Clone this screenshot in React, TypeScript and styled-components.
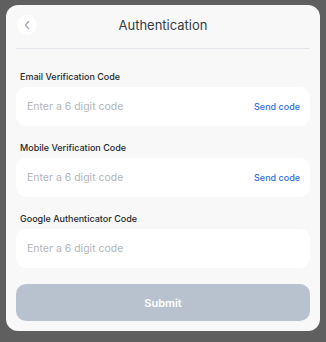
import React from "react";
import styled, { createGlobalStyle } from "styled-components";

const GlobalStyle = createGlobalStyle`
    html, body {
        margin: 0;
        padding: 0;
        background-color: #5f5f5f;
        font-family: Inter, "Noto Sans", sans-serif;
    }
    * {
        box-sizing: border-box;
    }
`;

const Page = styled.div`
    width: 326px;
    height: 342px;
    padding: 5px 6px 0 6px;
`;

const Modal = styled.div`
    width: 314px;
    height: 326px;
    background-color: #f8f8f8;
    border-radius: 12px;
    padding: 0 10px 10px 10px;
    display: flex;
    flex-direction: column;
`;

const Header = styled.div`
    height: 44px;
    display: flex;
    align-items: center;
    border-bottom: 1px solid #e3e5ea;
    padding-bottom: 3px;
`;

const BackBtn = styled.button`
    width: 20px;
    height: 20px;
    border-radius: 50%;
    border: none;
    background-color: #ffffff;
    display: flex;
    justify-content: center;
    align-items: center;
    padding: 0;
    margin-left: 1px;
    cursor: pointer;
`;

const Title = styled.h1`
    flex: 1;
    margin: 0 21px 0 0;
    text-align: center;
    font-size: 13px;
    font-weight: 400;
    color: #3a3d44;
`;

const Form = styled.div`
    display: flex;
    flex-direction: column;
    gap: 16px;
    padding-top: 22px;
`;

const Field = styled.div`
    display: flex;
    flex-direction: column;
    gap: 4px;
`;

const Label = styled.label`
    font-size: 9px;
    line-height: 12px;
    font-weight: 500;
    color: #25282e;
    padding-left: 4px;
`;

const InputBox = styled.div`
    height: 39px;
    background-color: #ffffff;
    border-radius: 10px;
    display: flex;
    align-items: center;
    padding: 0 10px 0 11px;
`;

const Input = styled.input`
    flex: 1;
    min-width: 0;
    border: none;
    outline: none;
    background: transparent;
    font-family: inherit;
    font-size: 10.5px;
    color: #25282e;
    padding: 0;
    &::placeholder {
        color: #b3b5ba;
    }
`;

const SendCode = styled.span`
    font-size: 9px;
    font-weight: 500;
    color: #2f6fe4;
    cursor: pointer;
`;

const SubmitBtn = styled.button`
    margin-top: 16px;
    height: 37px;
    width: 100%;
    border: none;
    border-radius: 10px;
    background-color: #b8c2ce;
    color: #ffffff;
    font-family: inherit;
    font-size: 11px;
    font-weight: 600;
`;

interface CodeFieldProps {
    label: string;
    sendable?: boolean;
}

const CodeField = ({ label, sendable }: CodeFieldProps) => {
    const [value, setValue] = React.useState("");
    return (
        <Field>
            <Label>{label}</Label>
            <InputBox>
                <Input
                    value={value}
                    onChange={(e) => setValue(e.target.value)}
                    placeholder="Enter a 6 digit code"
                />
                {sendable && <SendCode>Send code</SendCode>}
            </InputBox>
        </Field>
    );
};

export default function App() {
    return (
        <Page>
            <GlobalStyle />
            <Modal>
                <Header>
                    <BackBtn>
                        <svg width="8" height="10" viewBox="0 0 8 10" fill="none">
                            <path
                                d="M5.5 1.5L2.5 5L5.5 8.5"
                                stroke="#a3aaba"
                                strokeWidth="1.4"
                                strokeLinecap="round"
                                strokeLinejoin="round"
                            />
                        </svg>
                    </BackBtn>
                    <Title>Authentication</Title>
                </Header>
                <Form>
                    <CodeField label="Email Verification Code" sendable />
                    <CodeField label="Mobile Verification Code" sendable />
                    <CodeField label="Google Authenticator Code" />
                </Form>
                <SubmitBtn>Submit</SubmitBtn>
            </Modal>
        </Page>
    );
}
